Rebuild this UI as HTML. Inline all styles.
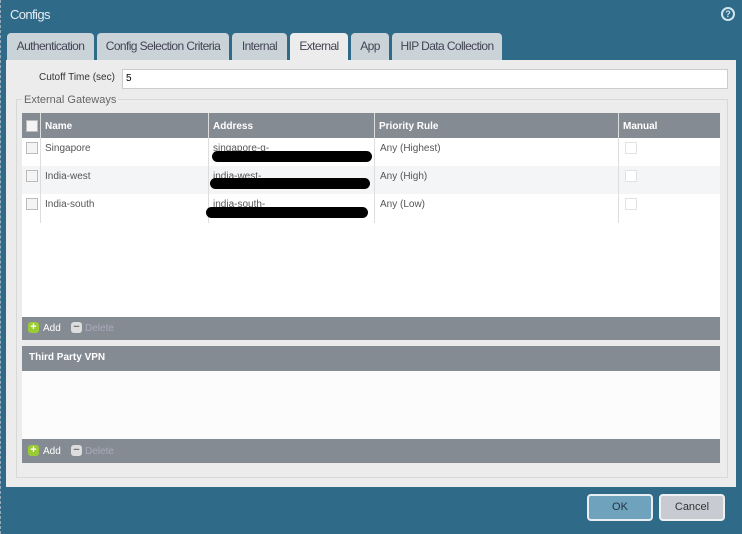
<!DOCTYPE html>
<html><head><style>
body{margin:0;width:742px;height:534px;background:#2f6a89;font-family:"Liberation Sans",sans-serif;position:relative;overflow:hidden}
.a{position:absolute}
.tab{position:absolute;top:33px;height:27px;background:#c9d3d8;border-radius:4px 4px 0 0;font-size:12px;color:#445;line-height:27px;text-align:center;letter-spacing:-0.6px}
.hd{background:#858b93;color:#fff;font-size:10px;font-weight:bold}
.cb{position:absolute;width:10px;height:10px;border:1px solid #bbb;background:#f4f4f4}
.txt{position:absolute;font-size:10px;color:#555}
.blot{position:absolute;height:11px;background:#000;border-radius:6px}
</style></head><body>
<div class="a" style="left:0;top:0;width:2px;height:534px;border-left:1px dashed #9ab"></div>
<div class="a" style="left:10px;top:7px;color:#e6eef3;font-size:13px;letter-spacing:-0.6px">Configs</div>
<div class="a" style="left:721px;top:7px;width:10px;height:10px;border:2px solid #cfe4ee;border-radius:50%;color:#cfe4ee;font-size:9px;line-height:10px;text-align:center;font-weight:bold">?</div>
<div class="tab" style="left:7px;width:87px">Authentication</div>
<div class="tab" style="left:97px;width:132px">Config Selection Criteria</div>
<div class="tab" style="left:232px;width:55px">Internal</div>
<div class="tab" style="left:290px;width:58px;background:#ececec">External</div>
<div class="tab" style="left:351px;width:38px">App</div>
<div class="tab" style="left:392px;width:110px">HIP Data Collection</div>
<div class="a" style="left:6px;top:60px;width:730px;height:427px;background:#ececec"></div>
<div class="txt" style="left:39px;top:72px;color:#333">Cutoff Time (sec)</div>
<div class="a" style="left:122px;top:69px;width:604px;height:18px;background:#fff;border:1px solid #ccc;font-size:10px;line-height:18px;text-indent:3px">5</div>
<div class="a" style="left:16px;top:99px;width:710px;height:377px;border:1px solid #d8d8d8"></div>
<div class="txt" style="left:22px;top:94px;background:#ececec;padding:0 2px;color:#666;font-size:11px">External Gateways</div>
<div class="a" style="left:22px;top:113px;width:698px;height:204px;background:#fff"></div>
<div class="a" style="left:22px;top:166px;width:698px;height:28px;background:#f3f5f7"></div>
<div class="a hd" style="left:22px;top:113px;width:698px;height:25px"></div>
<div class="a" style="left:40px;top:113px;width:1px;height:110px;background:#ddd"></div>
<div class="a" style="left:208px;top:113px;width:1px;height:110px;background:#ddd"></div>
<div class="a" style="left:374px;top:113px;width:1px;height:110px;background:#ddd"></div>
<div class="a" style="left:618px;top:113px;width:1px;height:110px;background:#ddd"></div>
<div class="cb" style="left:26px;top:120px"></div>
<div class="a hd" style="left:45px;top:121px;background:none">Name</div>
<div class="a hd" style="left:213px;top:121px;background:none">Address</div>
<div class="a hd" style="left:379px;top:121px;background:none">Priority Rule</div>
<div class="a hd" style="left:623px;top:121px;background:none">Manual</div>
<div class="cb" style="left:26px;top:142px"></div><div class="txt" style="left:45px;top:143px">Singapore</div><div class="txt" style="left:213px;top:143px">singapore-g-</div><div class="blot" style="left:212px;top:151px;width:160px"></div><div class="txt" style="left:380px;top:143px">Any (Highest)</div><div class="cb" style="left:625px;top:142px;border-color:#e2e2e2;background:#fff"></div>
<div class="cb" style="left:26px;top:170px"></div><div class="txt" style="left:45px;top:171px">India-west</div><div class="txt" style="left:213px;top:171px">india-west-</div><div class="blot" style="left:210px;top:178px;width:160px"></div><div class="txt" style="left:380px;top:171px">Any (High)</div><div class="cb" style="left:625px;top:170px;border-color:#e2e2e2;background:#fff"></div>
<div class="cb" style="left:26px;top:198px"></div><div class="txt" style="left:45px;top:199px">India-south</div><div class="txt" style="left:213px;top:199px">india-south-</div><div class="blot" style="left:206px;top:207px;width:162px"></div><div class="txt" style="left:380px;top:199px">Any (Low)</div><div class="cb" style="left:625px;top:198px;border-color:#e2e2e2;background:#fff"></div>
<div class="a" style="left:22px;top:317px;width:698px;height:23px;background:#858b93"></div>
<div class="a" style="left:28px;top:322px;width:11px;height:11px;border-radius:3px;background:#9c3;color:#fff;font-size:11px;line-height:11px;text-align:center;font-weight:bold">+</div>
<div class="txt" style="left:43px;top:323px;color:#fff">Add</div>
<div class="a" style="left:71px;top:322px;width:11px;height:11px;border-radius:3px;background:#ddd;color:#777;font-size:11px;line-height:10px;text-align:center;font-weight:bold">−</div>
<div class="txt" style="left:85px;top:323px;color:#aab">Delete</div>
<div class="a hd" style="left:22px;top:346px;width:698px;height:25px;line-height:24px;text-indent:7px">Third Party VPN</div>
<div class="a" style="left:22px;top:371px;width:698px;height:68px;background:#fcfcfc"></div>
<div class="a" style="left:22px;top:439px;width:698px;height:24px;background:#858b93"></div>
<div class="a" style="left:28px;top:445px;width:11px;height:11px;border-radius:3px;background:#9c3;color:#fff;font-size:11px;line-height:11px;text-align:center;font-weight:bold">+</div>
<div class="txt" style="left:43px;top:446px;color:#fff">Add</div>
<div class="a" style="left:71px;top:445px;width:11px;height:11px;border-radius:3px;background:#ddd;color:#777;font-size:11px;line-height:10px;text-align:center;font-weight:bold">−</div>
<div class="txt" style="left:85px;top:446px;color:#aab">Delete</div>
<div class="a" style="left:587px;top:494px;width:62px;height:23px;border:2px solid #e8eef2;border-radius:4px;background:#6fa3bd;font-size:11px;color:#234;text-align:center;line-height:23px">OK</div>
<div class="a" style="left:659px;top:494px;width:62px;height:23px;border:2px solid #eef0f2;border-radius:4px;background:#c8ccd2;font-size:11px;color:#333;text-align:center;line-height:23px">Cancel</div>
</body></html>
